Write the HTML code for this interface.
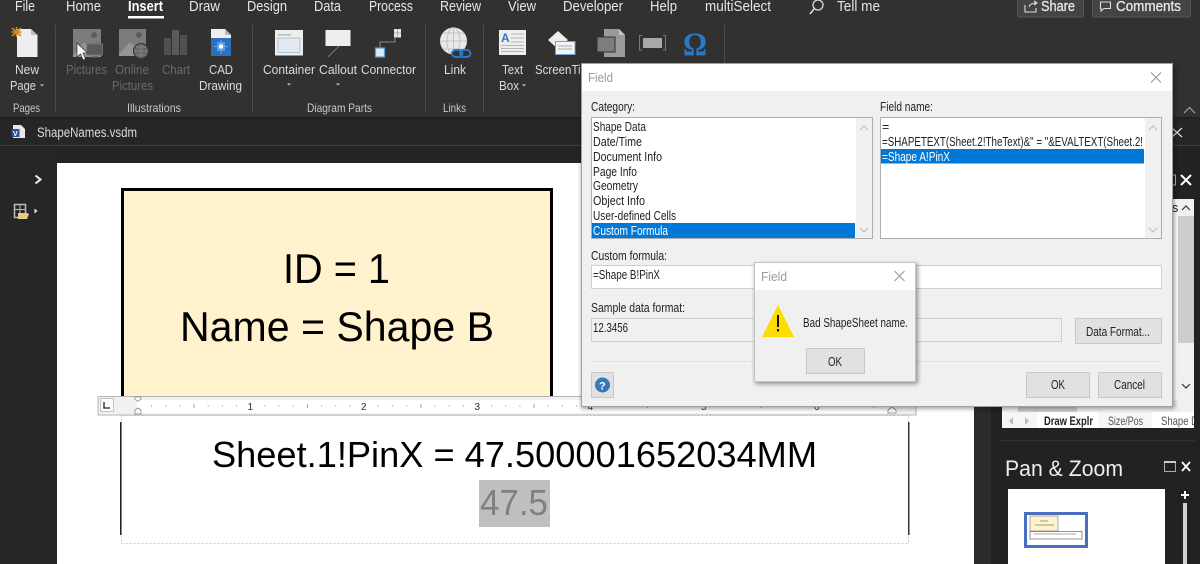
<!DOCTYPE html>
<html><head><meta charset="utf-8"><title>ShapeNames.vsdm</title>
<style>
html,body{margin:0;padding:0;width:1200px;height:564px;overflow:hidden;background:#212121}
svg{display:block;filter:blur(.3px)}
text{font-family:"Liberation Sans",sans-serif;white-space:pre}
.m{font-size:14.5px;fill:#e6e6e6}
.r{font-size:13px;fill:#dcdcdc}
.d{font-size:13px;fill:#6a6a6a}
.g{font-size:12px;fill:#c8c8c8}
.t{font-size:12.5px;fill:#222}
.s{font-size:12.5px;fill:#fff}
.c{font-size:42px;fill:#000}
</style></head><body>
<svg width="1200" height="564" viewBox="0 0 1200 564" xmlns="http://www.w3.org/2000/svg">
<defs><filter id="sh" x="-10%" y="-10%" width="120%" height="120%"><feGaussianBlur stdDeviation="2"/></filter></defs>
<!-- backgrounds -->
<rect width="1200" height="564" fill="#242424"/>
<rect width="1200" height="117" fill="#323130"/>
<rect y="117" width="1200" height="2" fill="#202020"/>
<rect y="119" width="1200" height="26" fill="#262626"/>
<rect y="145" width="1200" height="1" fill="#3f3f3f"/>
<rect x="974" y="146" width="226" height="418" fill="#222"/>
<rect x="974" y="146" width="17" height="418" fill="#2b2b2b"/>
<rect x="0" y="146" width="57" height="418" fill="#262626"/>
<rect x="57" y="163" width="917" height="401" fill="#fff"/>

<!-- menu -->
<text class="m" x="15" y="11" textLength="20" lengthAdjust="spacingAndGlyphs">File</text>
<text class="m" x="66" y="11" textLength="35" lengthAdjust="spacingAndGlyphs">Home</text>
<text class="m" x="128" y="11" textLength="35" lengthAdjust="spacingAndGlyphs" font-weight="bold" style="fill:#fff">Insert</text>
<text class="m" x="189" y="11" textLength="31" lengthAdjust="spacingAndGlyphs">Draw</text>
<text class="m" x="247" y="11" textLength="40" lengthAdjust="spacingAndGlyphs">Design</text>
<text class="m" x="314" y="11" textLength="27" lengthAdjust="spacingAndGlyphs">Data</text>
<text class="m" x="369" y="11" textLength="44" lengthAdjust="spacingAndGlyphs">Process</text>
<text class="m" x="440" y="11" textLength="41" lengthAdjust="spacingAndGlyphs">Review</text>
<text class="m" x="508" y="11" textLength="28" lengthAdjust="spacingAndGlyphs">View</text>
<text class="m" x="563" y="11" textLength="60" lengthAdjust="spacingAndGlyphs">Developer</text>
<text class="m" x="650" y="11" textLength="27" lengthAdjust="spacingAndGlyphs">Help</text>
<text class="m" x="705" y="11" textLength="66" lengthAdjust="spacingAndGlyphs">multiSelect</text>
<text class="m" x="837" y="11" textLength="43" lengthAdjust="spacingAndGlyphs">Tell me</text>
<rect x="128" y="16" width="36" height="2.5" fill="#fff"/>
<circle cx="818" cy="5" r="5" fill="none" stroke="#ddd" stroke-width="1.3"/>
<path d="M814 9L810 14" stroke="#ddd" stroke-width="1.500"/>
<!-- share/comments -->
<rect x="1017.500" y="-4" width="66" height="21" rx="2" fill="#444" stroke="#555"/>
<rect x="1092.500" y="-4" width="98" height="21" rx="2" fill="#444" stroke="#555"/>
<path d="M1025 5V12H1036V8M1029 7C1030 4 1033 3 1036 3M1034 1L1037 3L1034 5" fill="none" stroke="#ddd" stroke-width="1.100"/>
<path d="M1100.500 2H1110.500V8.500H1104L1101 11V8.500H1100.500Z" fill="none" stroke="#ddd" stroke-width="1.100"/>
<text class="m" x="1041" y="11" textLength="34" lengthAdjust="spacingAndGlyphs" stroke="#e8e8e8" stroke-width=".3">Share</text>
<text class="m" x="1116" y="11" textLength="65" lengthAdjust="spacingAndGlyphs" stroke="#e8e8e8" stroke-width=".3">Comments</text>

<!-- ribbon separators -->
<g fill="#4a4a4a">
<rect x="55" y="25" width="1" height="87"/><rect x="252" y="25" width="1" height="87"/>
<rect x="425" y="25" width="1" height="87"/><rect x="483" y="25" width="1" height="87"/>
<rect x="724" y="25" width="1" height="87"/>
</g>

<!-- ribbon icons -->
<path d="M17 29H31L37.500 35V57H17Z" fill="#eee"/><path d="M31 29L37.500 35H31Z" fill="#bbb"/>
<path d="M12 28L21 36M21 28L12 36M16.500 27V37M11.500 32H21.500" stroke="#c8892c" stroke-width="1.600"/>
<!-- pictures -->
<rect x="73" y="29" width="28" height="28" fill="#7c7c7c"/>
<path d="M73 55L84 42L93 52L101 55V57H73Z" fill="#949494"/><circle cx="94" cy="35" r="3" fill="#5c5c5c"/>
<rect x="87" y="44" width="15.500" height="11" fill="#5a5a5a" stroke="#6e6e6e"/>
<path d="M92 57H98" stroke="#5a5a5a" stroke-width="1.500"/>
<path d="M77 43V57L80.500 54L83 60L85.500 59L83 53H87.500Z" fill="#f5f5f5" stroke="#222" stroke-width=".6"/>
<!-- online -->
<rect x="119" y="29" width="27" height="27" fill="#7c7c7c"/>
<path d="M119 54L130 42L140 52V56H119Z" fill="#949494"/><circle cx="139" cy="35" r="3" fill="#5c5c5c"/>
<circle cx="141" cy="51" r="7.500" fill="#666" stroke="#323130"/>
<path d="M134 51H148M141 44V58M136 47H146M136 55H146" stroke="#8a8a8a" stroke-width=".8"/>
<!-- chart -->
<rect x="164" y="38" width="7" height="17" fill="#505050"/><rect x="172" y="30" width="7" height="25" fill="#5a5a5a"/><rect x="180" y="35" width="7" height="20" fill="#505050"/>
<!-- cad -->
<path d="M211 29H225L231 35V56H211Z" fill="#eee"/><path d="M225 29L231 35H225Z" fill="#bbb"/>
<rect x="211" y="38" width="20" height="18" fill="#2a70c0"/><rect x="217" y="42" width="8" height="9" fill="#5c9ce0"/>
<path d="M214 46.500H228M221 40V54" stroke="#6fa6e0" stroke-width="1"/><rect x="219" y="44.500" width="4" height="4" fill="#fff"/>
<!-- container -->
<rect x="275" y="30" width="28" height="25.500" fill="#eee"/><rect x="278" y="38" width="22" height="14.500" fill="#e3e8ee" stroke="#a9c4e0"/><rect x="278" y="34" width="13" height="1.500" fill="#bbb"/>
<!-- callout -->
<rect x="325.500" y="30" width="25" height="16" fill="#eee"/><path d="M339 46L328 57" stroke="#777" stroke-width="1"/>
<!-- connector -->
<rect x="375.500" y="48" width="9" height="9" fill="#dce8f4" stroke="#5c9bd8" stroke-width="1.200"/>
<path d="M380 48V42H395V38" fill="none" stroke="#888"/>
<rect x="394" y="29" width="7" height="8.500" fill="#e8e8e8"/><path d="M394 33H401M397.500 29V37" stroke="#888" stroke-width=".6"/>
<!-- link -->
<circle cx="453.500" cy="41" r="13.500" fill="#e8e8e8"/>
<path d="M440 41H467M453.500 27.500V54.500M443 33H464M443 49H464" stroke="#bbb" stroke-width=".8"/><ellipse cx="453.500" cy="41" rx="6.500" ry="13.500" fill="none" stroke="#bbb" stroke-width=".8"/>
<rect x="452" y="50" width="10.500" height="7" rx="3.500" fill="#323130" stroke="#2a78c8" stroke-width="2"/><rect x="460" y="50" width="10.500" height="7" rx="3.500" fill="none" stroke="#2a78c8" stroke-width="2"/>
<!-- text box -->
<rect x="499" y="30" width="27" height="25" fill="#eee"/>
<text x="501" y="42" style="font-size:12px;fill:#2a78c8" font-weight="bold">A</text>
<path d="M511 34H524M511 38H524M511 42H524M501 45.500H524M501 48.500H524M501 51.500H524" stroke="#b5b5b5"/>
<!-- screentip -->
<path d="M558 31L568 40L558 49L548 40Z" fill="#eee"/>
<rect x="555.500" y="41.500" width="19.500" height="13" fill="#f4f4f4" stroke="#6ba2d8"/><path d="M558 46H572M558 49H572" stroke="#aaa"/>
<!-- layers -->
<path d="M604 29H619L625 35V57H604Z" fill="#9a9a9a"/><rect x="597" y="37" width="18" height="15" fill="#7d7d7d" stroke="#323130"/>
<path d="M619 29L625 35H619Z" fill="#c4c4c4"/>
<!-- box -->
<path d="M642 35.500H639.500V50H642M663 35.500H665.500V50H663" fill="none" stroke="#7a7a7a"/><rect x="643" y="38" width="19" height="10" fill="#a8a8a8"/>
<text x="683" y="55" style="font-family:'Liberation Serif',serif;font-size:33px;fill:#2a78c8" font-weight="bold" textLength="24" lengthAdjust="spacingAndGlyphs">Ω</text>

<!-- ribbon labels -->
<text class="r" x="15" y="74" textLength="24" lengthAdjust="spacingAndGlyphs">New</text>
<text class="r" x="10" y="90" textLength="26" lengthAdjust="spacingAndGlyphs">Page</text>
<path d="M40 84.500h4l-2 2z" fill="#ccc"/>
<text class="g" x="13" y="112" textLength="27" lengthAdjust="spacingAndGlyphs">Pages</text>
<text class="d" x="66" y="74" textLength="41" lengthAdjust="spacingAndGlyphs">Pictures</text>
<text class="d" x="115" y="74" textLength="34" lengthAdjust="spacingAndGlyphs">Online</text>
<text class="d" x="112" y="90" textLength="41" lengthAdjust="spacingAndGlyphs">Pictures</text>
<text class="d" x="162" y="74" textLength="28" lengthAdjust="spacingAndGlyphs">Chart</text>
<text class="r" x="209" y="74" textLength="24" lengthAdjust="spacingAndGlyphs">CAD</text>
<text class="r" x="199" y="90" textLength="43" lengthAdjust="spacingAndGlyphs">Drawing</text>
<text class="g" x="127" y="112" textLength="54" lengthAdjust="spacingAndGlyphs">Illustrations</text>
<text class="r" x="263" y="74" textLength="52" lengthAdjust="spacingAndGlyphs">Container</text>
<text class="r" x="319" y="74" textLength="38" lengthAdjust="spacingAndGlyphs">Callout</text>
<text class="r" x="361" y="74" textLength="55" lengthAdjust="spacingAndGlyphs">Connector</text>
<path d="M287 83.500h4l-2 2zM336 83.500h4l-2 2z" fill="#ccc"/>
<text class="g" x="307" y="112" textLength="65" lengthAdjust="spacingAndGlyphs">Diagram Parts</text>
<text class="r" x="444" y="74" textLength="22" lengthAdjust="spacingAndGlyphs">Link</text>
<text class="g" x="443" y="112" textLength="23" lengthAdjust="spacingAndGlyphs">Links</text>
<text class="r" x="502" y="74" textLength="21" lengthAdjust="spacingAndGlyphs">Text</text>
<text class="r" x="499" y="90" textLength="20" lengthAdjust="spacingAndGlyphs">Box</text>
<path d="M522 84.500h4l-2 2z" fill="#ccc"/>
<text class="r" x="535" y="74" textLength="52" lengthAdjust="spacingAndGlyphs">ScreenTip</text>
<path d="M1184 113L1189.500 107.500L1195 113" fill="none" stroke="#aaa" stroke-width="1.100"/>

<!-- doc tab -->
<path d="M13 125H21L25 129V138H13Z" fill="#e8e8e8"/><rect x="11.500" y="129" width="8" height="8" fill="#2b4f9e"/>
<text x="13" y="136" style="font-size:7px;fill:#fff" font-weight="bold">V</text>
<text x="37" y="137" textLength="100" lengthAdjust="spacingAndGlyphs" style="font-size:13.5px;fill:#dcdcdc">ShapeNames.vsdm</text>
<path d="M1172 128L1182 137M1182 128L1172 137" stroke="#ddd" stroke-width="1.200"/>

<!-- left rail -->
<path d="M35.500 175.500L40.500 179.500L35.500 183.500" fill="none" stroke="#eee" stroke-width="2"/>
<rect x="14.500" y="204.500" width="11" height="13" fill="none" stroke="#bbb" stroke-width="1.500"/><path d="M20 204.500V217M14.500 209.500H25" stroke="#bbb"/>
<path d="M18 213H27L29 214L27 219H18Z" fill="#e8c98a"/>
<path d="M34.500 208.500L37.500 211L34.500 213.500Z" fill="#eee"/>

<!-- shape B -->
<rect x="122.500" y="189.500" width="429" height="215" fill="#fff2cc" stroke="#000" stroke-width="3"/>
<text class="c" x="283" y="283" textLength="107" lengthAdjust="spacingAndGlyphs">ID = 1</text>
<text class="c" x="180" y="341" textLength="314" lengthAdjust="spacingAndGlyphs">Name = Shape B</text>

<!-- text box below ruler -->
<rect x="121.500" y="415.500" width="787" height="128" fill="#fff" stroke="#ccc" stroke-dasharray="2 2"/>
<rect x="120" y="422" width="1.500" height="113" fill="#222"/><rect x="908" y="422" width="1.500" height="113" fill="#333"/>
<text x="212" y="467" style="font-size:36px;fill:#000" textLength="605" lengthAdjust="spacingAndGlyphs">Sheet.1!PinX = 47.500001652034MM</text>
<rect x="479" y="480" width="71" height="47" fill="#bfbfbf"/>
<text x="480" y="515" style="font-size:36px;fill:#808080" textLength="68" lengthAdjust="spacingAndGlyphs">47.5</text>

<!-- ruler -->
<rect x="98" y="396.500" width="818" height="18.500" fill="#f1f1f1" stroke="#b5b5b5"/>
<rect x="137" y="400" width="755" height="13" fill="#fff"/>
<rect x="100.500" y="398.500" width="13" height="13" fill="#fbfbfb" stroke="#c4c4c4"/>
<path d="M104 402V408H110" fill="none" stroke="#222" stroke-width="1.300"/>
<path d="M151 406H892" stroke="#888" stroke-width="1" stroke-dasharray="1 13.170"/>
<path d="M194 404V408M307.500 404V408M421 404V408M534 404V408M647.500 404V408M761 404V408M874 404V408" stroke="#aaa"/>
<g style="font-size:10px;fill:#333">
<text x="247.500" y="410">1</text><text x="361" y="410">2</text><text x="474.500" y="410">3</text><text x="587.500" y="410">4</text><text x="701" y="410">5</text><text x="814" y="410">6</text>
</g>
<path d="M135 397H141V399L138 401.500L135 399Z" fill="#fff" stroke="#888" stroke-width=".8"/>
<path d="M135 414V410L138 408L141 410V414Z" fill="#fff" stroke="#888" stroke-width=".8"/>
<path d="M888 413V410L892 407L896 410V413Z" fill="#fff" stroke="#888" stroke-width=".8"/>

<!-- right docked panel -->
<path d="M1181 175L1191 185M1191 175L1181 185" stroke="#fff" stroke-width="2"/>
<rect x="1164.500" y="175" width="11" height="10" fill="none" stroke="#bbb"/>
<rect x="1002" y="199" width="192" height="229" fill="#fff"/>
<rect x="1178" y="199" width="16" height="213" fill="#f0f0f0"/>
<rect x="1178" y="216" width="16" height="127" fill="#cdcdcd"/>
<text class="t" x="1172" y="212">s</text>
<path d="M1182 210L1186 206L1190 210" fill="none" stroke="#333" stroke-width="1.200"/>
<path d="M1182 384L1186 388L1190 384" fill="none" stroke="#333" stroke-width="1.200"/>
<rect x="1002" y="400" width="176" height="12" fill="#f0f0f0"/>
<rect x="1018" y="400" width="59" height="12" fill="#cdcdcd"/>
<rect x="1002" y="412" width="192" height="16" fill="#f6f6f6"/>
<path d="M1013 417L1009 421L1013 425Z" fill="#bbb"/><path d="M1025 417L1029 421L1025 425Z" fill="#bbb"/>
<rect x="1037" y="412" width="61" height="16" fill="#fff"/>
<rect x="1152" y="412" width="42" height="16" fill="#fff"/>
<text x="1044" y="425" style="font-size:12px;fill:#222" font-weight="bold" textLength="49" lengthAdjust="spacingAndGlyphs">Draw Explr</text>
<text x="1108" y="425" style="font-size:12px;fill:#555" textLength="35" lengthAdjust="spacingAndGlyphs">Size/Pos</text>
<text x="1161" y="425" style="font-size:12px;fill:#555" textLength="37" lengthAdjust="spacingAndGlyphs">Shape D</text>
<rect x="1194" y="412" width="6" height="16" fill="#222"/>
<rect x="1001" y="440" width="194" height="1" fill="#333"/>

<!-- pan & zoom -->
<text x="1005" y="476" style="font-size:22px;fill:#eee" textLength="118" lengthAdjust="spacingAndGlyphs">Pan &amp; Zoom</text>
<rect x="1164.500" y="461.500" width="11" height="10" fill="none" stroke="#aaa"/><rect x="1164" y="461" width="12" height="2" fill="#ccc"/>
<path d="M1182 462L1190 471M1190 462L1182 471" stroke="#fff" stroke-width="1.800"/>
<rect x="1008" y="489" width="157" height="75" fill="#fff"/>
<rect x="1025.500" y="513.500" width="61" height="33" fill="#fff" stroke="#4a6fc0" stroke-width="3"/>
<rect x="1030" y="516" width="28" height="15" fill="#fff2cc" stroke="#888" stroke-width=".7"/>
<rect x="1030" y="531.500" width="52" height="7.500" fill="#fff" stroke="#666" stroke-width=".7"/>
<path d="M1034 534H1076" stroke="#aaa" stroke-width="1"/>
<path d="M1040 521H1048M1035 525H1054" stroke="#998" stroke-width="1"/>
<path d="M1181 495H1189M1185 491V499" stroke="#fff" stroke-width="2"/>
<rect x="1183" y="503" width="4" height="61" fill="#d0d0d0"/>

<!-- Field dialog -->
<rect x="581" y="66" width="594" height="343" fill="#000" opacity=".35" filter="url(#sh)"/>
<rect x="581.500" y="63.500" width="591" height="343" fill="#f0f0f0" stroke="#a0a0a0"/>
<rect x="582" y="64" width="590" height="27" fill="#fff"/>
<text x="588" y="82" style="font-size:12.500px;fill:#999" textLength="25" lengthAdjust="spacingAndGlyphs">Field</text>
<path d="M1151 72.500L1161 82.500M1161 72.500L1151 82.500" stroke="#999" stroke-width="1.100"/>

<text class="t" x="591" y="111" textLength="44" lengthAdjust="spacingAndGlyphs">Category:</text>
<rect x="591.500" y="117.500" width="281" height="121" fill="#fff" stroke="#abadb3"/>
<rect x="856" y="118" width="16" height="120" fill="#f0f0f0"/>
<rect x="592" y="223" width="263" height="15" fill="#0078d7"/>
<path d="M860 130L864 126L868 130M860 228L864 232L868 228" fill="none" stroke="#bbb" stroke-width="1"/>
<text class="t" x="593" y="131" textLength="53" lengthAdjust="spacingAndGlyphs">Shape Data</text>
<text class="t" x="593" y="146" textLength="49" lengthAdjust="spacingAndGlyphs">Date/Time</text>
<text class="t" x="593" y="161" textLength="69" lengthAdjust="spacingAndGlyphs">Document Info</text>
<text class="t" x="593" y="176" textLength="44" lengthAdjust="spacingAndGlyphs">Page Info</text>
<text class="t" x="593" y="190" textLength="45" lengthAdjust="spacingAndGlyphs">Geometry</text>
<text class="t" x="593" y="205" textLength="52" lengthAdjust="spacingAndGlyphs">Object Info</text>
<text class="t" x="593" y="220" textLength="83" lengthAdjust="spacingAndGlyphs">User-defined Cells</text>
<text class="s" x="593" y="235" textLength="75" lengthAdjust="spacingAndGlyphs">Custom Formula</text>

<text class="t" x="880" y="111" textLength="53" lengthAdjust="spacingAndGlyphs">Field name:</text>
<rect x="880.500" y="117.500" width="281" height="121" fill="#fff" stroke="#abadb3"/>
<rect x="1145" y="118" width="16" height="120" fill="#f0f0f0"/>
<rect x="881" y="149" width="263" height="14.500" fill="#0078d7"/>
<path d="M1149 130L1153 126L1157 130M1149 228L1153 232L1157 228" fill="none" stroke="#bbb" stroke-width="1"/>
<text class="t" x="882" y="131">=</text>
<text class="t" x="882" y="146" textLength="261" lengthAdjust="spacingAndGlyphs">=SHAPETEXT(Sheet.2!TheText)&amp;" = "&amp;EVALTEXT(Sheet.2!</text>
<text class="s" x="882" y="161" textLength="68" lengthAdjust="spacingAndGlyphs">=Shape A!PinX</text>

<text class="t" x="591" y="260" textLength="76" lengthAdjust="spacingAndGlyphs">Custom formula:</text>
<rect x="591.500" y="265.500" width="570" height="23" fill="#fff" stroke="#d0d0d0"/>
<text class="t" x="593" y="279" textLength="67" lengthAdjust="spacingAndGlyphs">=Shape B!PinX</text>

<text class="t" x="591" y="312" textLength="94" lengthAdjust="spacingAndGlyphs">Sample data format:</text>
<rect x="591.500" y="318.500" width="470" height="23" fill="#f0f0f0" stroke="#d0d0d0"/>
<text class="t" x="593" y="332" textLength="35" lengthAdjust="spacingAndGlyphs">12.3456</text>

<rect x="1075.500" y="318.500" width="86" height="25" fill="#e1e1e1" stroke="#c8c8c8"/>
<text class="t" x="1086" y="336" textLength="64" lengthAdjust="spacingAndGlyphs">Data Format...</text>
<rect x="591" y="361" width="570" height="1" fill="#d9e3ea"/>
<rect x="591.500" y="372.500" width="22" height="25" fill="#e1e1e1" stroke="#c8c8c8"/>
<circle cx="602.500" cy="385" r="7.500" fill="#3579bd"/>
<text x="599" y="389.500" style="font-size:11px;fill:#fff" font-weight="bold">?</text>
<rect x="1026.500" y="372.500" width="63" height="25" fill="#e1e1e1" stroke="#c8c8c8"/>
<text class="t" x="1051" y="389" textLength="14" lengthAdjust="spacingAndGlyphs">OK</text>
<rect x="1098.500" y="372.500" width="63" height="25" fill="#e1e1e1" stroke="#c8c8c8"/>
<text class="t" x="1114" y="389" textLength="31" lengthAdjust="spacingAndGlyphs">Cancel</text>

<!-- alert -->
<rect x="755" y="264" width="163" height="120" fill="#000" opacity=".4" filter="url(#sh)"/>
<rect x="754.500" y="262.500" width="161" height="119" fill="#f0f0f0" stroke="#c4c4c4"/>
<rect x="755" y="263" width="160" height="27" fill="#fff"/>
<text x="761" y="281" style="font-size:12.500px;fill:#999" textLength="26" lengthAdjust="spacingAndGlyphs">Field</text>
<path d="M894.500 271L904.500 281M904.500 271L894.500 281" stroke="#999" stroke-width="1.100"/>
<path d="M778 305L794 337H762Z" fill="#ffdc00"/>
<rect x="777" y="315" width="2" height="12" fill="#111"/><rect x="777" y="329" width="2" height="2.500" fill="#111"/>
<text class="t" x="803" y="327" textLength="105" lengthAdjust="spacingAndGlyphs">Bad ShapeSheet name.</text>
<rect x="806.500" y="348.500" width="58" height="25" fill="#e1e1e1" stroke="#c8c8c8"/>
<text class="t" x="828" y="366" textLength="14" lengthAdjust="spacingAndGlyphs">OK</text>
</svg>
</body></html>
